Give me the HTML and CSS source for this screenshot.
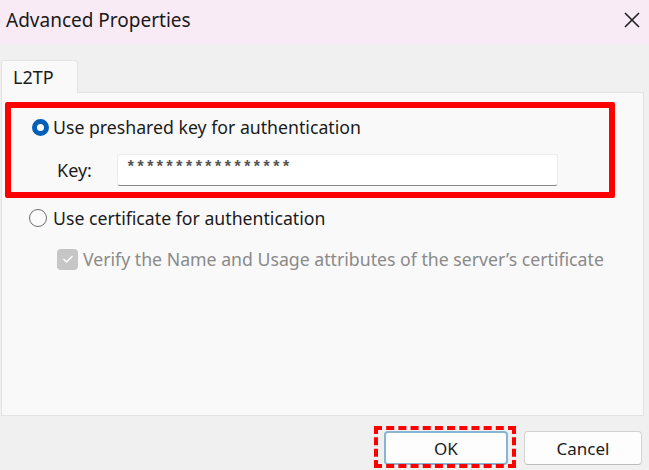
FILE: index.html
```html
<!DOCTYPE html>
<html lang="en">
<head>
    <meta charset="UTF-8">
    <meta name="viewport" content="width=device-width, initial-scale=1.0">
    <title>Advanced Properties</title>
    <link rel="stylesheet" href="styles.css">
</head>
<body>
    <div class="dialog">
        <!-- title bar -->
        <div class="titlebar">
            <span class="title">Advanced Properties</span>
            <svg class="close" width="18" height="18" viewBox="0 0 18 18">
                <path d="M2 2 L16 16 M16 2 L2 16" stroke="#1f1f1f" stroke-width="1.6" fill="none"/>
            </svg>
        </div>

        <div class="body">
            <div class="tabs">
                <div class="tab">L2TP</div>
            </div>

            <div class="panel">
                <!-- highlighted preshared key block -->
                <div class="highlight">
                    <div class="option">
                        <span class="radio checked"></span>
                        <span class="label">Use preshared key for authentication</span>
                    </div>
                    <div class="key-row">
                        <span class="key-label">Key:</span>
                        <div class="key-input">*****************</div>
                    </div>
                </div>

                <div class="option second">
                    <span class="radio"></span>
                    <span class="label">Use certificate for authentication</span>
                </div>
                <div class="check-row">
                    <span class="checkbox">
                        <svg width="12" height="10" viewBox="0 0 12 10">
                            <path d="M1.5 5 L4.5 8 L10.5 2" stroke="#fff" stroke-width="1.4" fill="none"/>
                        </svg>
                    </span>
                    <span class="label disabled">Verify the Name and Usage attributes of the server’s certificate</span>
                </div>
            </div>

            <div class="footer">
                <div class="marked">
                    <button class="btn default">OK</button>
                </div>
                <button class="btn">Cancel</button>
            </div>
        </div>
    </div>
</body>
</html>
```

FILE: styles.css
```css
body {
    margin: 0;
    font-family: "Noto Sans", "Open Sans", sans-serif;
    color: #1b1b1b;
    background: #f0f0f0;
}

.dialog {
    width: 649px;
    height: 470px;
    overflow: hidden;
    background: #f0f0f0;
}

.titlebar {
    height: 44px;
    background: #f9ebf5;
    display: flex;
    align-items: center;
    justify-content: space-between;
    padding: 0 8px 4px 6px;
    box-sizing: border-box;
}

.title {
    font-size: 19px;
    color: #1a1a1a;
}

.body {
    padding: 16px 0 0 1px;
}

.tabs {
    display: flex;
}

.tab {
    width: 77px;
    height: 33px;
    box-sizing: border-box;
    border: 1px solid #e3e3e3;
    border-bottom: none;
    border-radius: 3px 3px 0 0;
    background: #f9f9f9;
    font-size: 18px;
    line-height: 24px;
    padding: 4px 0 0 11px;
    margin-bottom: -1px;
    position: relative;
}

.panel {
    width: 643px;
    height: 324px;
    box-sizing: border-box;
    border: 1px solid #e3e3e3;
    background: #f9f9f9;
    padding: 9px 0 0 3px;
}

.highlight {
    width: 610px;
    height: 96px;
    box-sizing: border-box;
    border: 6px solid #ff0000;
    border-radius: 2px;
    padding: 6px 0 0 21px;
}

.option {
    display: flex;
    align-items: center;
    height: 26px;
    gap: 4px;
}

.option.second {
    margin: 7px 0 0 24px;
    gap: 6px;
}

.label {
    font-size: 17.7px;
    line-height: 24px;
}

.label.disabled {
    color: #8a8a8a;
}

.radio {
    width: 17px;
    height: 17px;
    box-sizing: border-box;
    border-radius: 50%;
    border: 1px solid #6e6e6e;
    background: #fbfbfb;
}

.option.second .radio {
    width: 18px;
    height: 18px;
}

.radio.checked {
    border: 5px solid #005fb8;
    background: #ffffff;
}

.key-row {
    display: flex;
    align-items: center;
    margin-top: 14px;
}

.key-label {
    font-size: 18px;
    width: 60px;
    padding-left: 25px;
}

.key-input {
    width: 441px;
    height: 32px;
    box-sizing: border-box;
    background: #ffffff;
    border: 1px solid #ececec;
    border-bottom: 1px solid #8a8a8a;
    border-radius: 3px;
    font-family: "Liberation Mono", monospace;
    font-size: 16px;
    font-weight: bold;
    letter-spacing: 0.1px;
    color: #555;
    padding: 4px 0 0 8px;
}

.check-row {
    display: flex;
    align-items: center;
    gap: 5px;
    margin: 16px 0 0 52px;
}

.checkbox {
    width: 21px;
    height: 21px;
    border-radius: 4px;
    background: #c6c6c6;
    display: flex;
    align-items: center;
    justify-content: center;
}

.footer {
    display: flex;
    justify-content: flex-end;
    gap: 16px;
    padding: 15px 7px 0 0;
}

.marked {
    position: relative;
}

/* dashed annotation drawn over the OK button */
.marked::after {
    content: "";
    position: absolute;
    left: -10px;
    right: -8px;
    top: -5px;
    bottom: -3px;
    border: 4px dashed #ff0000;
    pointer-events: none;
}

.btn {
    display: block;
    width: 118px;
    height: 34px;
    font-family: "Noto Sans", "Open Sans", sans-serif;
    font-size: 17px;
    color: #1b1b1b;
    background: #fdfdfd;
    border: 1px solid #d3d3d3;
    border-bottom-color: #bdbdbd;
    border-radius: 4px;
}

.btn.default {
    width: 124px;
    border: 2px solid #8ab4d4;
}
```
